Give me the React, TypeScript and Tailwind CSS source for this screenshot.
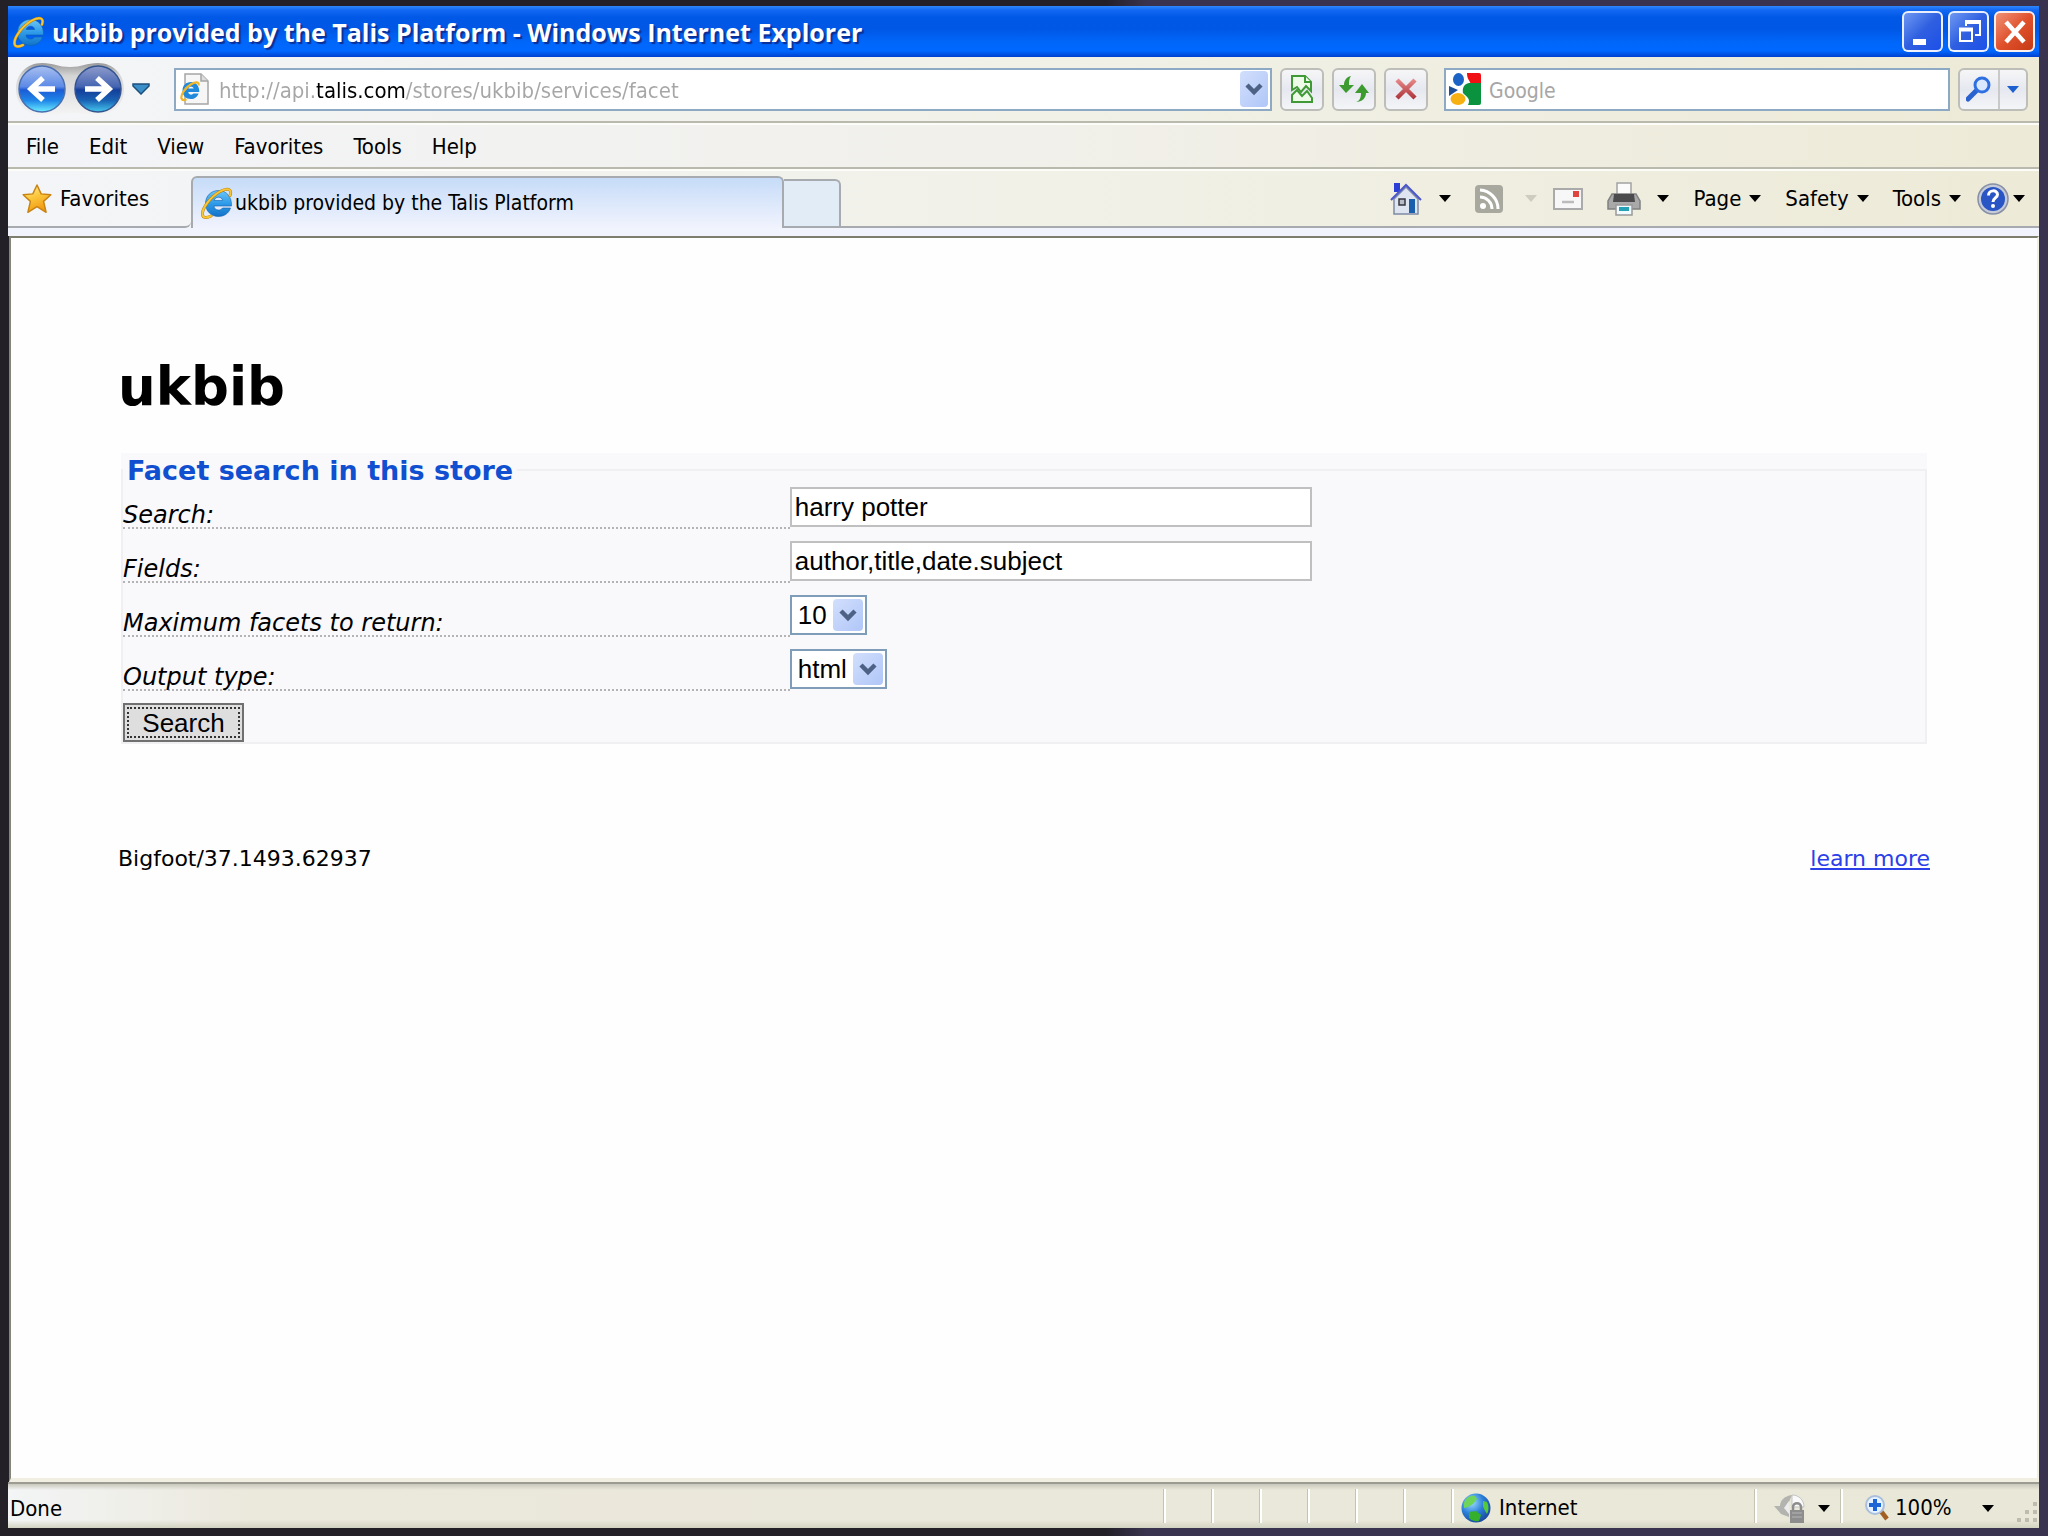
import type { ReactNode } from 'react'

const MENUS = ['File', 'Edit', 'View', 'Favorites', 'Tools', 'Help']

function IEIcon({ className }: { className?: string }) {
  return (
    <svg viewBox="0 0 32 32" className={className} aria-hidden="true">
      <defs>
        <linearGradient id="ieBlue" x1="0" y1="0" x2="0" y2="1">
          <stop offset="0" stopColor="#6cc6f7" />
          <stop offset="0.5" stopColor="#2f9be8" />
          <stop offset="1" stopColor="#1273c8" />
        </linearGradient>
      </defs>
      <path
        d="M17.500 3.500c-7.500 0-13 5.500-13 13s5.500 13 13 13c5.500 0 10.300-3 12-8.500h-8c-1 1.500-2.300 2-4 2-2.500 0-4.300-1.300-4.500-4H30.500C31 10 25.500 3.500 17.500 3.500zM13.200 13.500c.5-2 2-3.300 4.300-3.300s3.800 1.300 4.200 3.300z"
        fill="url(#ieBlue)"
        stroke="#0f5fae"
        strokeWidth="0.6"
      />
      <path
        d="M29 8.500C31.500 1.500 26 .5 19 4.500 10 9.500 1 21 1.500 27.500c.3 4 4.500 3.500 8.500 1.500"
        fill="none"
        stroke="#b9810f"
        strokeWidth="3"
        strokeLinecap="round"
      />
      <path
        d="M29 8.500C31.500 1.500 26 .5 19 4.500 10 9.500 1 21 1.500 27.500c.3 4 4.500 3.500 8.500 1.500"
        fill="none"
        stroke="#f7c637"
        strokeWidth="2"
        strokeLinecap="round"
      />
    </svg>
  )
}

function Caret({ className = 'text-black' }: { className?: string }) {
  return (
    <svg viewBox="0 0 12 7" className={`h-[7px] w-3 shrink-0 ${className}`} aria-hidden="true">
      <path d="M0 0h12L6 7z" fill="currentColor" />
    </svg>
  )
}

function Chevron() {
  return (
    <svg viewBox="0 0 18 13" className="h-[13px] w-[18px]" aria-hidden="true">
      <path d="M2 2l7 7 7-7" fill="none" stroke="#4d6185" strokeWidth="4.500" />
    </svg>
  )
}

// Back and forward share one rounded plate
function NavButtons() {
  return (
    <div className="relative flex h-[50px] w-[108px] shrink-0 items-center justify-between px-[2px]">
      <svg viewBox="0 0 108 54" className="absolute -top-[2px] left-0 h-[54px] w-[108px]" aria-hidden="true">
        <defs>
          <linearGradient id="plate" x1="0" y1="0" x2="0" y2="1">
            <stop offset="0" stopColor="#9a9a9a" />
            <stop offset="0.250" stopColor="#d5d5d5" />
            <stop offset="1" stopColor="#f4f4f4" />
          </linearGradient>
        </defs>
        <path
          d="M26 1C38 1 42 5 54 5S70 1 82 1c15 0 26 11 26 26S97 53 82 53c-12 0-16-2-28-2s-16 2-28 2C11 53 0 42 0 27S11 1 26 1z"
          fill="url(#plate)"
        />
      </svg>
      <button type="button" aria-label="Back" className="relative size-12 rounded-full">
        <svg viewBox="0 0 48 48" className="size-12" aria-hidden="true">
          <defs>
            <linearGradient id="backFill" x1="0" y1="0" x2="0" y2="1">
              <stop offset="0" stopColor="#a9bff0" />
              <stop offset="0.450" stopColor="#5c8ae6" />
              <stop offset="0.520" stopColor="#1c5bd6" />
              <stop offset="0.750" stopColor="#1e86e8" />
              <stop offset="1" stopColor="#6df0ff" />
            </linearGradient>
          </defs>
          <circle cx="24" cy="24" r="23" fill="url(#backFill)" stroke="#4a6fb0" strokeWidth="1.500" />
          <path d="M37 24H14M25 13L13 24l12 11" fill="none" stroke="#fff" strokeWidth="5.500" />
        </svg>
      </button>
      <button type="button" aria-label="Forward" className="relative size-12 rounded-full">
        <svg viewBox="0 0 48 48" className="size-12" aria-hidden="true">
          <defs>
            <linearGradient id="fwdFill" x1="0" y1="0" x2="0" y2="1">
              <stop offset="0" stopColor="#8e9bcb" />
              <stop offset="0.450" stopColor="#4565b2" />
              <stop offset="0.520" stopColor="#143f9a" />
              <stop offset="0.750" stopColor="#1963b5" />
              <stop offset="1" stopColor="#45c8ee" />
            </linearGradient>
          </defs>
          <circle cx="24" cy="24" r="23" fill="url(#fwdFill)" stroke="#34548f" strokeWidth="1.500" />
          <path d="M11 24h23M23 13l12 11-12 11" fill="none" stroke="#fff" strokeWidth="5.500" />
        </svg>
      </button>
    </div>
  )
}

function TitleButton({ label, close, children }: { label: string; close?: boolean; children: ReactNode }) {
  return (
    <button
      type="button"
      aria-label={label}
      className={`flex size-[41px] items-center justify-center rounded-md border-2 border-white/90 ${
        close
          ? 'bg-gradient-to-br from-[#ee9074] via-[#e0512c] to-[#c53a12]'
          : 'bg-gradient-to-br from-[#6f97f2] via-[#2f5fe0] to-[#1c4fe8]'
      }`}
    >
      {children}
    </button>
  )
}

function ToolButton({ label, children }: { label: string; children: ReactNode }) {
  return (
    <button
      type="button"
      aria-label={label}
      className="flex h-[43px] w-11 shrink-0 items-center justify-center rounded-md border-2 border-[#bdbdb9] bg-gradient-to-b from-[#f6f6f7] via-[#e6e8f0] to-[#f4f5f7]"
    >
      {children}
    </button>
  )
}

function CommandButton({ label }: { label: string }) {
  return (
    <button type="button" className="flex items-center gap-2">
      {label}
      <Caret />
    </button>
  )
}

function FieldRow({ id, label, children }: { id: string; label: string; children: ReactNode }) {
  return (
    <div className="flex h-[54px] items-start">
      <label
        htmlFor={id}
        className="flex h-[42px] w-[37%] items-end border-b-2 border-dotted border-[#b4b4b4] text-2xl/[24px] italic"
      >
        {label}
      </label>
      {children}
    </div>
  )
}

function SelectBox({ id, value, className }: { id: string; value: string; className: string }) {
  return (
    <div className={`relative h-10 ${className}`}>
      <select
        id={id}
        defaultValue={value}
        className="h-full w-full appearance-none border-2 border-[#7f9db9] bg-white pl-[6px] font-['Liberation_Sans',sans-serif] text-[26px]/[30px]"
      >
        <option value={value}>{value}</option>
      </select>
      <span className="pointer-events-none absolute inset-y-1 right-1 flex w-[30px] items-center justify-center rounded-sm bg-gradient-to-br from-[#d2dffc] to-[#b0c6f8]">
        <Chevron />
      </span>
    </div>
  )
}

function TitleBar() {
  return (
    <header className="flex h-[51px] items-center bg-[linear-gradient(180deg,#2f86fb_0%,#1268f2_8%,#0058e6_22%,#0057e5_45%,#0067fb_72%,#0068ff_88%,#0040cf_100%)] pr-1 pl-[5px]">
      <IEIcon className="size-8 shrink-0" />
      <h1 className="ml-[7px] grow font-['Open_Sans',sans-serif] text-[25px]/[32px] font-bold text-white [text-shadow:2px_2px_1px_#0a2f96]">
        ukbib provided by the Talis Platform - Windows Internet Explorer
      </h1>
      <div className="flex gap-[5px]">
        <TitleButton label="Minimize">
          <svg viewBox="0 0 32 32" className="size-8">
            <path d="M6 23h13v6H6z" fill="#fff" />
          </svg>
        </TitleButton>
        <TitleButton label="Restore">
          <svg viewBox="0 0 32 32" className="size-8" fill="none" stroke="#fff" strokeWidth="2">
            <path d="M13 10V5.500h14V19h-5" />
            <path d="M12 6h16" strokeWidth="4" />
            <path d="M7 13h12v12H7z" />
            <path d="M6 13.500h14" strokeWidth="4" />
          </svg>
        </TitleButton>
        <TitleButton label="Close" close>
          <svg viewBox="0 0 32 32" className="size-8">
            <path d="M7 6l18 20M25 6L7 26" stroke="#fff" strokeWidth="4.500" />
          </svg>
        </TitleButton>
      </div>
    </header>
  )
}

function AddressBar() {
  return (
    <div className="flex h-[66px] items-center border-b-2 border-[#b9b9ad] bg-gradient-to-r from-[#f3f5f8] via-[#f1f1e8] to-[#edead7] pr-[11px] pl-2">
      <NavButtons />
      <button type="button" aria-label="Recent pages" className="mr-6 ml-2">
        <svg viewBox="0 0 18 12" className="h-3 w-[18px]">
          <path d="M1 1h16v2l-8 8-8-8z" fill="#3b8fc9" stroke="#1c4f7c" strokeWidth="1.500" />
        </svg>
      </button>
      <div className="flex h-[43px] grow items-center border-2 border-[#8ea9c4] bg-white pr-[2px] pl-1">
        <svg viewBox="0 0 30 32" className="h-8 w-[30px] shrink-0" aria-hidden="true">
          <path d="M5 1h16l7 7v23H5z" fill="#f6f6f6" stroke="#a5a5a5" strokeWidth="1.500" />
          <path d="M21 1v7h7" fill="#ddd" stroke="#a5a5a5" strokeWidth="1.500" />
          <path d="M11 9c-5 0-8.500 3.500-8.500 8.500S6 26 11 26c3.500 0 6.500-2 7.500-5.500h-5c-1.500 2-5 1.300-5.200-1.500h11C19.500 13 16 9 11 9zM8.300 15.500c.5-2.500 5-2.500 5.400 0z" fill="#2089dc" />
          <path d="M18.500 12.500c1-4-3-4-7.500-1.300C5 15 .5 21.500 1.500 25.500c1 2.500 3 1.800 5 .8" fill="none" stroke="#f0b62a" strokeWidth="2.200" />
        </svg>
        <input
          type="text"
          aria-label="Address"
          defaultValue="http://api.talis.com/stores/ukbib/services/facet"
          className="ml-[9px] min-w-0 grow bg-[linear-gradient(90deg,#a6a6a6_97px,#000_97px,#000_187px,#a6a6a6_187px)] bg-clip-text pt-1 text-transparent outline-none"
        />
        <button
          type="button"
          aria-label="Show address history"
          className="flex h-9 w-7 items-center justify-center rounded-sm bg-gradient-to-br from-[#d2dffc] to-[#b0c6f8]"
        >
          <Chevron />
        </button>
      </div>
      <div className="mr-4 ml-2 flex gap-2">
        <ToolButton label="Compatibility View">
          <svg viewBox="0 0 24 30" className="h-[30px] w-6" fill="#eefbe9" stroke="#3f9a35" strokeWidth="2">
            <path d="M2 16V2h13l6 6v9l-5-5-5 6-4-5z" />
            <path d="M15 2v6h6" />
            <path d="M2 28v-7l5-5 5 6 5-5 5 7v4z" />
          </svg>
        </ToolButton>
        <ToolButton label="Refresh">
          <svg viewBox="0 0 30 28" className="h-7 w-[30px]" fill="#3c9a2e">
            <path d="M12 1C7 2 5 6 5 10H0l7 8 8-8h-5c0-4 0-6 2-9z" />
            <path d="M17 27c4-1 5-5 5-9h-6l7-9 7 9h-3c0 5-4 9-10 9z" />
          </svg>
        </ToolButton>
        <ToolButton label="Stop">
          <svg viewBox="0 0 22 22" className="size-[22px]">
            <defs>
              <linearGradient id="stopRed" x1="0" y1="0" x2="0" y2="22" gradientUnits="userSpaceOnUse">
                <stop offset="0" stopColor="#ec8f8f" />
                <stop offset="1" stopColor="#a82f35" />
              </linearGradient>
            </defs>
            <path d="M2 2l18 18M20 2L2 20" stroke="url(#stopRed)" strokeWidth="4.500" />
          </svg>
        </ToolButton>
      </div>
      <div className="flex h-[43px] w-[506px] items-center border-2 border-[#8ea9c4] bg-white pl-[3px]">
        <svg viewBox="0 0 32 32" className="size-8 shrink-0" aria-hidden="true">
          <path d="M18 0h12a2 2 0 0 1 2 2v10H22c-1-5-4-5-4-12z" fill="#f00f12" />
          <path d="M20 10h12v20a2 2 0 0 1-2 2H19c3-6-1-8-5-12-1-5 1-9 6-10z" fill="#0b923f" />
          <ellipse cx="9.500" cy="6.500" rx="5.500" ry="6.500" fill="#1b63c4" />
          <path d="M0 13l9 4-9 6z" fill="#1c4f97" />
          <ellipse cx="9" cy="26" rx="7.500" ry="6" fill="#f6b011" />
        </svg>
        <input
          type="text"
          aria-label="Search the web"
          placeholder="Google"
          className="ml-2 min-w-0 grow pt-1 text-[21px] outline-none placeholder:text-[#a6a6a6]"
        />
      </div>
      <div className="ml-2 flex h-[43px] overflow-hidden rounded-md border-2 border-[#bdbdb9] bg-gradient-to-b from-[#f6f6f7] via-[#e6e8f0] to-[#f4f5f7]">
        <button type="button" aria-label="Search" className="flex w-10 items-center justify-center border-r-2 border-[#c9c9c9]">
          <svg viewBox="0 0 26 26" className="size-[26px]" fill="none">
            <path d="M2 23l8-8" stroke="#2a61cf" strokeWidth="5" strokeLinecap="round" />
            <circle cx="16" cy="9" r="7" fill="#d9e8ff" stroke="#2f6fe0" strokeWidth="3" />
          </svg>
        </button>
        <button type="button" aria-label="Search options" className="flex w-[26px] items-center justify-center">
          <Caret className="text-[#1c5fd0]" />
        </button>
      </div>
    </div>
  )
}

function TabBar() {
  return (
    <div className="border-b-8 border-[#f1f3fd] bg-gradient-to-r from-[#f3f5f8] via-[#f1f1e8] to-[#edead7] shadow-[inset_0_2px_0_#fcfcf8]">
      <div className="flex h-[59px] items-stretch">
        <button
          type="button"
          className="flex w-[183px] items-center gap-[7px] rounded-br-md border-b-2 border-[#a7abb0] pt-[2px] pl-[13px]"
        >
          <svg viewBox="0 0 32 32" className="h-[31px] w-8 shrink-0" aria-hidden="true">
            <defs>
              <linearGradient id="star" x1="0" y1="0" x2="0.400" y2="1">
                <stop offset="0" stopColor="#fff2b0" />
                <stop offset="0.500" stopColor="#fbc93e" />
                <stop offset="1" stopColor="#f29a12" />
              </linearGradient>
            </defs>
            <path
              d="M16 2l4.300 9.200 10 1-7.500 6.800 2.600 11.200L16 24.500 6.600 30.200 9.200 19 1.700 12.200l10-1z"
              fill="url(#star)"
              stroke="#c98312"
              strokeWidth="1.500"
              strokeLinejoin="round"
            />
          </svg>
          Favorites
        </button>
        <div className="mt-[7px] flex w-[593px] items-center rounded-t-md border-2 border-b-0 border-[#a7abb0] bg-gradient-to-b from-[#c6dcf8] to-[#f1f3fd] pl-2">
          <IEIcon className="size-8 shrink-0" />
          <span className="pl-[2px] text-[21px]">ukbib provided by the Talis Platform</span>
        </div>
        <div className="flex grow border-b-2 border-[#a7abb0]">
          <button
            type="button"
            aria-label="New Tab"
            className="mt-[10px] w-[57px] rounded-tr-md border-t-2 border-r-2 border-[#a7abb0] bg-[#e2ecf6]"
          />
          <div className="ml-auto flex items-center pt-[2px] pr-[14px]">
            <button type="button" aria-label="Home" className="flex items-center gap-4">
              <svg viewBox="0 0 34 34" className="size-[34px]">
                <path d="M5 1h6v9H5z" fill="#2b3fd6" />
                <path d="M5 17L17 5l12 12v15H5z" fill="#dfe5f0" stroke="#7f8aa5" strokeWidth="1.500" />
                <path d="M2 18L17 3l15 15" fill="none" stroke="#4a56c9" strokeWidth="2" />
                <path d="M10 17h6v6h-6z" fill="#b7bcc8" stroke="#34363c" strokeWidth="1.500" />
                <path d="M20 17h6v14h-6z" fill="#195fae" />
              </svg>
              <Caret />
            </button>
            <button type="button" aria-label="Feeds" className="ml-6 flex items-center gap-[22px]" disabled>
              <svg viewBox="0 0 28 28" className="size-7">
                <rect width="28" height="28" rx="4" fill="#a9a89f" />
                <circle cx="8" cy="21" r="3" fill="#fff" />
                <path d="M5 12a12 12 0 0 1 12 12M5 5a19 19 0 0 1 18 19" fill="none" stroke="#fff" strokeWidth="3" />
              </svg>
              <Caret className="text-[#cdccbe]" />
            </button>
            <button type="button" aria-label="Read Mail" className="ml-4">
              <svg viewBox="0 0 30 22" className="h-[22px] w-[30px]">
                <rect x="1" y="1" width="28" height="20" fill="#f7f7f7" stroke="#aaa" strokeWidth="2" />
                <rect x="20" y="3" width="6" height="6" fill="#e0443f" />
                <path d="M9 14h12" stroke="#bbb" strokeWidth="2.500" />
              </svg>
            </button>
            <button type="button" aria-label="Print" className="ml-6 flex items-center gap-4">
              <svg viewBox="0 0 34 34" className="size-[34px]">
                <path d="M10 1h14v13H10z" fill="#fbfbfb" stroke="#a3a3a3" strokeWidth="1.500" />
                <path d="M5 12h24l4 7v8H1v-8z" fill="#a9a9a9" stroke="#808080" strokeWidth="1.500" />
                <path d="M7 12h20l1 8H6z" fill="#4b4b4d" />
                <path d="M9 23h16v10H9z" fill="#f2fbff" stroke="#999" strokeWidth="1.500" />
                <path d="M12 25h10v4H12z" fill="#25a2b6" />
              </svg>
              <Caret />
            </button>
            <div className="ml-6 flex gap-6">
              <CommandButton label="Page" />
              <CommandButton label="Safety" />
              <CommandButton label="Tools" />
            </div>
            <button type="button" aria-label="Help" className="ml-4 flex items-center gap-1">
              <svg viewBox="0 0 32 32" className="size-8">
                <circle cx="16" cy="16" r="15" fill="#c5cbd8" stroke="#868fa5" strokeWidth="1.500" />
                <circle cx="16" cy="16" r="12" fill="#2a55c4" />
                <path d="M11.500 12.500c0-6 9-6 9-1 0 3.500-4.500 3.500-4.500 7.500" fill="none" stroke="#fff" strokeWidth="3" />
                <circle cx="16" cy="23" r="2" fill="#fff" />
              </svg>
              <Caret />
            </button>
          </div>
        </div>
      </div>
    </div>
  )
}

function PageContent() {
  return (
    <main className="ml-px grow border-t-2 border-r-2 border-b-4 border-l-2 border-t-[#7d7e6e] border-r-[#f1efe2] border-b-[#f1efe2] border-l-[#85867a] bg-[#fefefe] px-[107px] pt-[119px] font-['DejaVu_Sans',sans-serif] text-black">
      <h2 className="text-[53px]/[60px] font-bold">ukbib</h2>
      <div className="mx-[3px] mt-9 bg-[#f9f9fc]">
        <fieldset className="min-w-0 border-2 border-[#f0f0f3]">
          <legend className="px-1 pt-1 pb-[2px] text-[27px]/[28px] font-bold text-[#0f4fd0]">Facet search in this store</legend>
          <form onSubmit={e => e.preventDefault()}>
            <FieldRow id="query" label="Search:">
              <input
                id="query"
                type="text"
                defaultValue="harry potter"
                className="h-10 w-[29%] border-2 border-[#c0c0c0] bg-white px-[3px] font-['Liberation_Sans',sans-serif] text-[26px]/[30px]"
              />
            </FieldRow>
            <FieldRow id="fields" label="Fields:">
              <input
                id="fields"
                type="text"
                defaultValue="author,title,date.subject"
                className="h-10 w-[29%] border-2 border-[#c0c0c0] bg-white px-[3px] font-['Liberation_Sans',sans-serif] text-[26px]/[30px]"
              />
            </FieldRow>
            <FieldRow id="max" label="Maximum facets to return:">
              <SelectBox id="max" value="10" className="w-[77px]" />
            </FieldRow>
            <FieldRow id="output" label="Output type:">
              <SelectBox id="output" value="html" className="w-[97px]" />
            </FieldRow>
            <button
              type="submit"
              className="block h-[39px] w-[121px] border-2 border-[#707070] bg-[#dedede] p-[2px] font-['Liberation_Sans',sans-serif] text-[26px]/[28px]"
            >
              <span className="flex h-full items-center justify-center border-2 border-dotted border-[#333]">Search</span>
            </button>
          </form>
        </fieldset>
      </div>
      <footer className="mt-[101px] flex justify-between text-[22px]/[28px]">
        <span>Bigfoot/37.1493.62937</span>
        <a href="#learn-more" className="text-[#2a40e8] underline decoration-2 underline-offset-2">
          learn more
        </a>
      </footer>
    </main>
  )
}

function StatusBar() {
  return (
    <footer className="flex h-[46px] shrink-0 items-stretch border-t-2 border-[#9c9c92] bg-[linear-gradient(180deg,#c9c8bc_0,transparent_6px,transparent_36px,#d3d3c2_44px),linear-gradient(90deg,#f3f5f6,#ebe8dc_12%,#e9e8d8)]">
      <span className="flex grow items-center pt-[6px] pl-[2px]">Done</span>
      {[0, 1, 2, 3, 4, 5].map(i => (
        <span key={i} className="my-[5px] w-12 border-l-2 border-white shadow-[-1px_0_0_#c5c4b4]" />
      ))}
      <span className="my-[5px] flex w-[303px] items-center gap-2 border-l-2 border-white pt-1 pl-[7px] shadow-[-1px_0_0_#c5c4b4]">
        <svg viewBox="0 0 30 30" className="size-[30px]" aria-hidden="true">
          <defs>
            <radialGradient id="globe" cx="0.350" cy="0.300" r="0.800">
              <stop offset="0" stopColor="#9fe0ff" />
              <stop offset="0.500" stopColor="#2b7fd8" />
              <stop offset="1" stopColor="#173f94" />
            </radialGradient>
          </defs>
          <circle cx="15" cy="15" r="14.500" fill="url(#globe)" />
          <path d="M3 10C5 4 10 2 14 3l2 3-4 5-5 3-4 1z" fill="#6fd45a" />
          <path d="M22 8l4 1c2 4 2 8 0 12l-3-5-1-3z" fill="#55c93c" />
          <path d="M8 19l7-1 5 4-2 6c-4 1-8-1-10-3z" fill="#35b02c" />
        </svg>
        Internet
      </span>
      <button
        type="button"
        aria-label="Protected mode"
        className="my-[5px] flex w-[86px] items-center justify-between border-l-2 border-white pt-1 pr-[11px] pl-4 shadow-[-1px_0_0_#c5c4b4]"
      >
        <svg viewBox="0 0 34 30" className="h-[30px] w-[34px]">
          <path d="M19 2c7 0 12 5 12 12H19z" fill="#fafafa" stroke="#c3c3c3" />
          <path d="M19 2C11 3 7 8 7 13H1l7 8 8 3V9z" fill="#b3b3af" />
          <path d="M16 8v13l-5-6" fill="#ececec" />
          <path d="M20 17v-3c0-5 8-5 8 0v3" fill="none" stroke="#8d8d8d" strokeWidth="2.500" />
          <path d="M17 17h14v13H17z" fill="#8d8d8d" />
          <path d="M19 20h10M19 24h10" stroke="#b5b5b5" />
        </svg>
        <Caret />
      </button>
      <button
        type="button"
        className="my-[5px] flex w-[198px] items-center border-l-2 border-white pt-1 pl-[22px] shadow-[-1px_0_0_#c5c4b4]"
      >
        <svg viewBox="0 0 24 26" className="mr-[6px] h-[26px] w-6" aria-hidden="true">
          <path d="M15 15l7 9" stroke="#a35f22" strokeWidth="4.500" />
          <circle cx="10" cy="10" r="9" fill="#e6f2ff" stroke="#a9bfdc" strokeWidth="2" />
          <path d="M10 4v12M4 10h12" stroke="#1d66d6" strokeWidth="4" />
        </svg>
        100%
        <span className="ml-[30px]">
          <Caret />
        </span>
        <svg viewBox="0 0 24 24" className="mt-auto ml-auto size-6" fill="#bdbcae" aria-hidden="true">
          <path d="M18 3h4v4h-4zM10 11h4v4h-4zM18 11h4v4h-4zM2 19h4v4H2zM10 19h4v4h-4zM18 19h4v4h-4z" />
        </svg>
      </button>
    </footer>
  )
}

export default function App() {
  return (
    <div className="flex min-h-screen flex-col bg-[linear-gradient(90deg,#232028_0,#232028_54%,#3a3350_56%,#3a3350)] pt-[6px] pr-[9px] pb-2 pl-2 font-['DejaVu_Sans_Condensed','DejaVu_Sans',sans-serif] text-[22px]/[28px] text-black">
      <TitleBar />
      <AddressBar />
      <nav className="flex h-[46px] items-center gap-[30px] border-b-2 border-[#b9b9ad] bg-gradient-to-r from-[#f3f4f8] via-[#f1f0ea] to-[#edead7] pt-1 pl-[18px] shadow-[inset_0_2px_0_#fcfcf8]">
        {MENUS.map(menu => (
          <button key={menu} type="button">
            {menu}
          </button>
        ))}
      </nav>
      <TabBar />
      <PageContent />
      <StatusBar />
    </div>
  )
}
